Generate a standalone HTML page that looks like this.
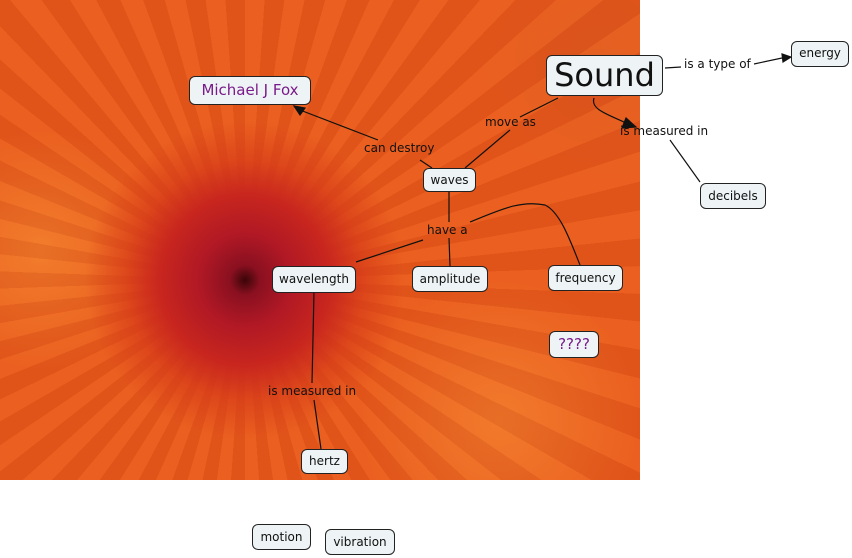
<!DOCTYPE html>
<html><head><style>
body{margin:0;width:852px;height:558px;background:#fff;position:relative;overflow:hidden;font-family:"DejaVu Sans","Liberation Sans",sans-serif;}
#bg{position:absolute;left:0;top:0;width:640px;height:480px;
background:
radial-gradient(circle at 245px 280px,#3a0508 0,#8a1020 15px,#b01825 45px,#c8261e 85px,rgba(215,60,25,.7) 120px,rgba(230,80,25,0) 160px),
repeating-conic-gradient(from 0deg at 245px 280px,rgba(255,140,60,.12) 0 4deg,rgba(170,40,10,.12) 4deg 8deg),
radial-gradient(circle at 600px 60px,#e05a1e 0,rgba(230,90,30,0) 120px),
radial-gradient(circle at 40px 250px,#f07a2a 0,rgba(240,120,40,0) 120px),
radial-gradient(circle at 500px 420px,#f0782a 0,rgba(240,120,40,0) 140px),
#e85a1c;}
.n{position:absolute;box-sizing:border-box;background:#eef4f6;border:1px solid #222;border-radius:6px;font-size:12px;color:#111;text-align:center;white-space:nowrap;}
.l{position:absolute;font-size:12px;color:#111;white-space:nowrap;}
svg{position:absolute;left:0;top:0}
</style></head><body>
<div id="bg"></div>
<svg width="852" height="558" fill="none" stroke="#111" stroke-width="1.2">
<line x1="665" y1="68" x2="681" y2="67"/>
<line x1="754" y1="64" x2="782" y2="58"/>
<polygon points="782,54 791,57 783,62" fill="#111"/>
<path d="M594 98 C590 110 610 115 628 124"/>
<polygon points="626,118 636,127 622,128" fill="#111"/>
<line x1="670" y1="140" x2="700" y2="182"/>
<line x1="558" y1="98" x2="520" y2="117"/>
<line x1="510" y1="130" x2="465" y2="168"/>
<line x1="432" y1="168" x2="420" y2="160"/>
<line x1="378" y1="140" x2="300" y2="110"/>
<polygon points="294,106 305,108 300,115" fill="#111"/>
<line x1="449" y1="192" x2="449" y2="222"/>
<line x1="449" y1="238" x2="450" y2="266"/>
<line x1="423" y1="240" x2="356" y2="262"/>
<path d="M470 222 C500 210 520 200 545 205 C560 212 570 240 580 265"/>
<line x1="314" y1="292" x2="312" y2="383"/>
<line x1="314" y1="400" x2="321" y2="449"/>
</svg>
<div class="n" style="left:189px;top:76px;width:122px;height:29px;line-height:27px;font-size:15px;color:#7a1a8a">Michael J Fox</div>
<div class="n" style="left:546px;top:55px;width:117px;height:41px;line-height:38px;font-size:32px;">Sound</div>
<div class="n" style="left:791px;top:41px;width:58px;height:26px;line-height:23px;">energy</div>
<div class="n" style="left:700px;top:183px;width:66px;height:26px;line-height:24px;">decibels</div>
<div class="n" style="left:423px;top:168px;width:53px;height:24px;line-height:22px;">waves</div>
<div class="n" style="left:272px;top:266px;width:84px;height:27px;line-height:25px;">wavelength</div>
<div class="n" style="left:412px;top:266px;width:76px;height:26px;line-height:24px;">amplitude</div>
<div class="n" style="left:548px;top:265px;width:75px;height:26px;line-height:24px;">frequency</div>
<div class="n" style="left:549px;top:331px;width:50px;height:27px;line-height:25px;font-size:15px;color:#7a1a8a">????</div>
<div class="n" style="left:301px;top:449px;width:47px;height:25px;line-height:23px;">hertz</div>
<div class="n" style="left:252px;top:524px;width:59px;height:26px;line-height:24px;">motion</div>
<div class="n" style="left:325px;top:529px;width:70px;height:26px;line-height:24px;">vibration</div>
<div class="l" style="left:684px;top:57px">is a type of</div>
<div class="l" style="left:485px;top:115px">move as</div>
<div class="l" style="left:620px;top:124px">is measured in</div>
<div class="l" style="left:364px;top:141px">can destroy</div>
<div class="l" style="left:427px;top:223px">have a</div>
<div class="l" style="left:268px;top:384px">is measured in</div>
</body></html>
